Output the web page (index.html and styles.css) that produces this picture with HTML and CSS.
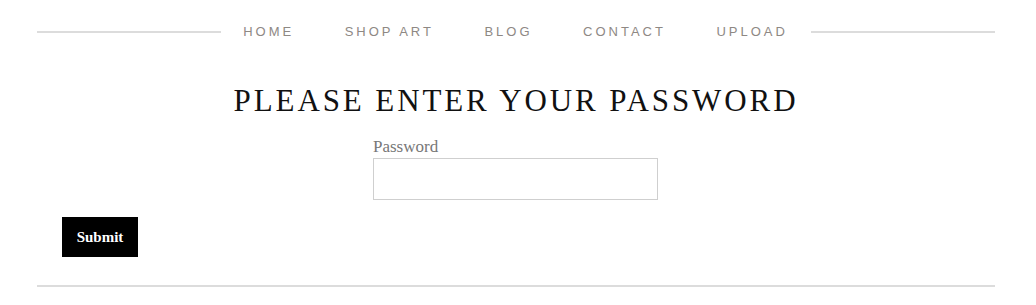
FILE: index.html
```html
<!DOCTYPE html>
<html lang="en">
<head>
    <meta charset="UTF-8">
    <title>Password</title>
    <link rel="stylesheet" href="styles.css">
</head>
<body>
<div class="page">
    <div class="nav">
        <span class="nav_line"></span>
        <a href="#">Home</a>
        <a href="#">Shop Art</a>
        <a href="#">Blog</a>
        <a href="#">Contact</a>
        <a href="#">Upload</a>
        <span class="nav_line"></span>
    </div>

    <h1 class="title">Please enter your password</h1>

    <form class="login">
        <div class="field">
            <label for="password">Password</label>
            <input type="password" id="password">
        </div>
        <button type="submit" class="submit">Submit</button>
    </form>

    <div class="footer_line"></div>
</div>
</body>
</html>
```

FILE: styles.css
```css
* {
    box-sizing: border-box;
    margin: 0;
    padding: 0;
}

body {
    background: #fff;
    font-family: "Liberation Serif", "DejaVu Serif", serif;
}

.page {
    width: 958px;
    margin: 0 0 0 37px;
    padding-top: 22px;
}

.nav {
    display: flex;
    align-items: center;
    gap: 50.5px;
}

.nav_line {
    flex: 1;
    height: 2px;
    background: #dcdcdc;
}

.nav .nav_line:first-child {
    margin-right: -26px;
}

.nav .nav_line:last-child {
    margin-left: -27px;
}

.nav a {
    font-family: "Liberation Sans", Arial, sans-serif;
    font-size: 13px;
    letter-spacing: 3px;
    text-transform: uppercase;
    color: #8e8884;
    text-decoration: none;
    line-height: 20px;
}

.nav a:first-of-type {
    margin-left: -2px;
}

.title {
    margin-top: 41px;
    text-align: center;
    font-size: 31px;
    font-weight: normal;
    letter-spacing: 2.9px;
    text-transform: uppercase;
    color: #111;
    line-height: 36px;
}

.login {
    margin-top: 19px;
}

.field {
    width: 285px;
    margin: 0 0 0 336px;
}

.field label {
    display: block;
    font-size: 17px;
    color: #777;
    line-height: 18px;
}

.field input {
    display: block;
    width: 285px;
    height: 42px;
    border: 1px solid #cfcfcf;
    margin-top: 2px;
}

.submit {
    margin: 17px 0 0 25px;
    width: 76px;
    height: 40px;
    background: #000;
    color: #fff;
    border: none;
    font-family: "Liberation Serif", "DejaVu Serif", serif;
    font-weight: bold;
    font-size: 15px;
}

.footer_line {
    margin-top: 28px;
    height: 2px;
    background: #dcdcdc;
}
```
